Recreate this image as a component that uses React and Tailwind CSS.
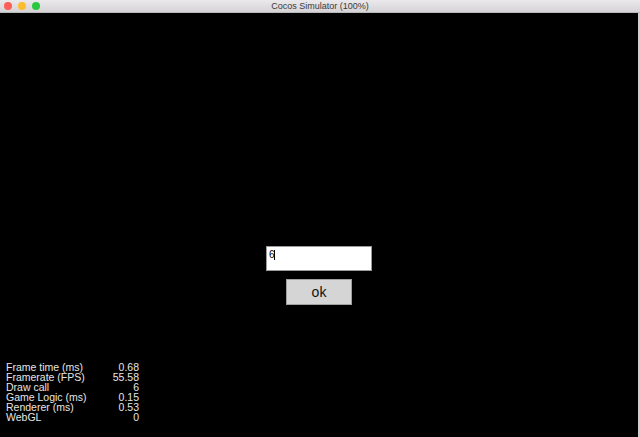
export default function App() {
  const stats = [
    ["Frame time (ms)", "0.68"],
    ["Framerate (FPS)", "55.58"],
    ["Draw call", "6"],
    ["Game Logic (ms)", "0.15"],
    ["Renderer (ms)", "0.53"],
    ["WebGL", "0"],
  ]

  return (
    <div className="flex h-[437px] w-[640px] flex-col overflow-hidden bg-black font-['Liberation_Sans',Arial,sans-serif]">
      {/* Title bar */}
      <div className="relative flex h-[13px] shrink-0 items-center justify-center border-b border-[#b9b9b9] bg-gradient-to-b from-[#ebe9eb] to-[#d5d3d5]">
        <div className="absolute left-[4px] top-[2px] flex gap-[6px]">
          <span className="h-[8px] w-[8px] rounded-full bg-[#fc5f57]"></span>
          <span className="h-[8px] w-[8px] rounded-full bg-[#fdbb2e]"></span>
          <span className="h-[8px] w-[8px] rounded-full bg-[#29c840]"></span>
        </div>
        <span className="text-[9px] leading-none text-[#3a3a3a]">Cocos Simulator (100%)</span>
      </div>

      {/* Game canvas */}
      <div className="flex flex-1 flex-col border-r-2 border-[#cfcfcf]">
        <div className="flex flex-col items-center pt-[233px]">
          <div className="flex h-[25px] w-[106px] items-start border border-[#9a9a9a] bg-white px-[2px] pt-[3px]">
            <span className="text-[10px] leading-[10px] text-black">6</span>
            <span className="-ml-[1px] h-[10px] w-px bg-black"></span>
          </div>
          <button className="mt-[8px] flex h-[26px] w-[66px] items-center justify-center border border-[#9f9f9f] bg-[#d5d5d5] text-[14px] text-[#111]">
            ok
          </button>
        </div>

        <div className="mt-auto mb-[15px] w-[139px] pl-[6px] text-[10.5px] leading-[10px] text-[#e6e6e6]">
          {stats.map(([label, value]) => (
            <div key={label} className="flex justify-between">
              <span>{label}</span>
              <span>{value}</span>
            </div>
          ))}
        </div>
      </div>
    </div>
  )
}
